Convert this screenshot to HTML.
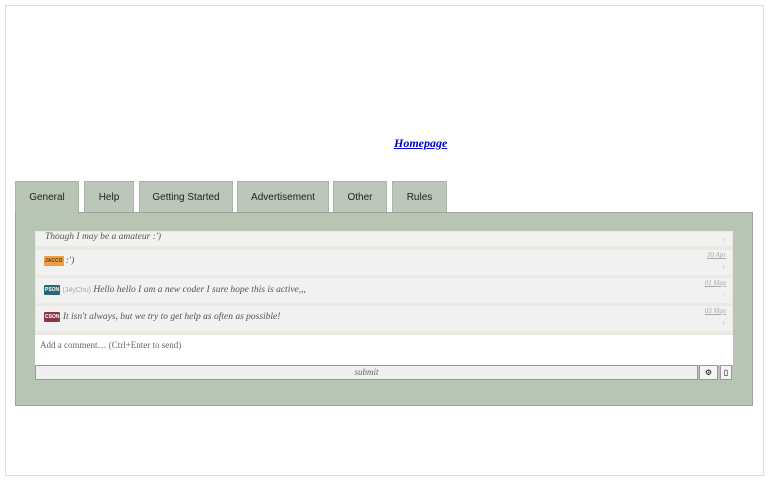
<!DOCTYPE html>
<html><head><style>
body{margin:0;width:768px;height:480px;background:#fff;position:relative;overflow:hidden;font-family:"Liberation Sans",sans-serif}
.frame{position:absolute;left:5px;top:5px;width:757px;height:469px;border:1px solid #ddd}
.home{position:absolute;left:394px;top:136px;font:italic bold 12px "Liberation Serif",serif;color:#00c;text-decoration:underline}
.tab{position:absolute;top:181px;height:31px;background:#bcc6ba;border:1px solid #a9b3a7;border-bottom:none;box-sizing:border-box;font-size:10px;color:#222;text-align:center;line-height:32px}
.panel{position:absolute;left:15px;top:212px;width:738px;height:194px;background:#b8c4b4;border:1px solid #9aa497;box-sizing:border-box}
.chat{position:absolute;left:35px;top:231px;width:698px;height:104px;background:#eaeae2}
.row{position:absolute;left:1px;width:696px;background:#f1f1f1;font:italic 9.5px "Liberation Serif",serif;color:#555}
.row .t{position:absolute;left:8px}
.d{position:absolute;right:6px;font:italic 7px "Liberation Serif",serif;color:#aaa;text-decoration:underline}
.s{position:absolute;right:7px;font-size:6px;color:#aaa}
.b{display:inline-block;font:bold 5px sans-serif;color:#fff;padding:2px 1px;border-radius:1px;vertical-align:middle}
.inp{position:absolute;left:35px;top:335px;width:698px;height:30px;background:#fff;font:9px "Liberation Serif",serif;color:#666}
.sub{position:absolute;left:35px;top:365px;width:663px;height:15px;background:#efefef;border:1px solid #999;box-sizing:border-box;font:italic 9px "Liberation Serif",serif;color:#666;text-align:center;line-height:13px}
.btn{position:absolute;top:365px;height:15px;background:#f4f4f4;border:1px solid #999;box-sizing:border-box;font-size:8px;text-align:center;line-height:13px}
</style></head><body>
<div class="frame"></div>
<a class="home">Homepage</a>
<div class="panel"></div>
<div class="tab" style="left:15px;width:64px;height:32px;background:#b8c4b4">General</div>
<div class="tab" style="left:84px;width:50px">Help</div>
<div class="tab" style="left:139px;width:94px">Getting Started</div>
<div class="tab" style="left:237px;width:92px">Advertisement</div>
<div class="tab" style="left:333px;width:54px">Other</div>
<div class="tab" style="left:392px;width:55px">Rules</div>
<div class="chat">
<div class="row" style="top:1px;height:14px"><span class="t" style="left:9px;top:0">Though I may be a amateur :')</span><span class="s" style="top:6px">↑</span></div>
<div class="row" style="top:19px;height:25px"><span class="t" style="top:6px"><span class="b" style="background:#e8a040;color:#633">JACCO</span> :')</span><span class="d" style="top:1px">30 Apr</span><span class="s" style="top:15px">↑</span></div>
<div class="row" style="top:47px;height:25px"><span class="t" style="top:7px"><span class="b" style="background:#2a6878">PSON</span> <span style="font-style:normal;font-family:'Liberation Sans';font-size:7px;color:#aaa">(J4yChu)</span> Hello hello I am a new coder I sure hope this is active,,,</span><span class="d" style="top:1px">01 May</span><span class="s" style="top:15px">↑</span></div>
<div class="row" style="top:75px;height:25px"><span class="t" style="top:6px"><span class="b" style="background:#883848">CSON</span> It isn't always, but we try to get help as often as possible!</span><span class="d" style="top:1px">03 May</span><span class="s" style="top:15px">↑</span></div>
</div>
<div class="inp"><span style="position:absolute;left:5px;top:5px">Add a comment… (Ctrl+Enter to send)</span></div>
<div class="sub">submit</div>
<div class="btn" style="left:699px;width:19px">⚙</div>
<div class="btn" style="left:720px;width:12px">▯</div>
</body></html>
